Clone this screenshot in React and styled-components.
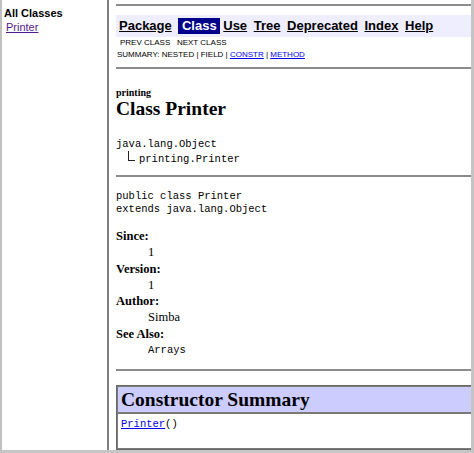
import React from "react";
import styled, { createGlobalStyle } from "styled-components";

const Global = createGlobalStyle`
  html, body { margin: 0; padding: 0; background: #fff; }
  body { font-family: "Liberation Serif", "Times New Roman", serif; color: #000; }
`;

const SERIF = `"Liberation Serif", "Times New Roman", serif`;
const SANS = `"Liberation Sans", Arial, sans-serif`;
const MONO = `"Liberation Mono", "Courier New", monospace`;

const Window = styled.div`
  display: flex;
  width: 474px;
  height: 453px;
  box-sizing: border-box;
  border-left: 2px solid #c0c0c0;
  border-right: 3px solid #c4c4c4;
  border-bottom: 3px solid #c6c6c6;
  overflow: hidden;
`;

const Sidebar = styled.nav`
  flex: 0 0 105px;
  box-sizing: border-box;
  padding: 7px 0 0 2px;
  font-family: ${SANS};
  font-size: 11px;
  line-height: 13px;
`;

const SideTitle = styled.div`
  font-weight: bold;
`;

const SideLink = styled.a`
  display: inline-block;
  margin: 1px 0 0 2px;
  color: #551a8b;
  text-decoration: underline;
`;

const Main = styled.main`
  flex: 1;
  min-width: 0;
  border-left: 2px solid #7f7f7f;
  padding-left: 7px;
  overflow: hidden;
`;

const Content = styled.div`
  width: 390px;
`;

const Rule = styled.div`
  height: 2px;
  background: #8c8c8c;
  margin-top: ${(p) => p.$mt}px;
`;

const NavBar = styled.div`
  display: flex;
  align-items: center;
  gap: 3px;
  height: 22px;
  margin-top: 9px;
  padding-left: 3px;
  background: #eeeeff;
  font-family: ${SANS};
  font-weight: bold;
  font-size: 13px;
  line-height: 16px;
`;

const NavLink = styled.a`
  color: #000;
  text-decoration: underline;
  margin-right: 3.6px;
  white-space: nowrap;
`;

const NavCurrent = styled.span`
  background: #00008b;
  color: #fff;
  padding: 0 3.6px;
  white-space: nowrap;
`;

const SubNav = styled.div`
  font-family: ${SANS};
  font-size: 8px;
  line-height: 12px;
  padding-left: ${(p) => p.$indent}px;
  white-space: pre;
`;

const SubLink = styled.a`
  color: #0000ee;
  text-decoration: underline;
`;

const PackageName = styled.div`
  margin-top: 18.5px;
  font-family: ${SERIF};
  font-weight: bold;
  font-size: 10px;
  line-height: 10px;
`;

const ClassTitle = styled.h2`
  margin: 0;
  font-family: ${SERIF};
  font-weight: bold;
  font-size: 19.5px;
  line-height: 22px;
`;

const MonoBlock = styled.div`
  margin-top: ${(p) => p.$mt}px;
  font-family: ${MONO};
  font-size: 10.5px;
  line-height: ${(p) => p.$lh}px;
  white-space: pre;
`;

const Elbow = styled.span`
  display: inline-block;
  width: 7px;
  height: 10px;
  margin: 0 4px 0 12px;
  border-left: 1px solid #222;
  border-bottom: 1px solid #222;
  vertical-align: 1px;
  box-sizing: border-box;
`;

const Tags = styled.dl`
  margin: 12px 0 0;
  font-family: ${SERIF};
  font-size: 12.5px;
  line-height: 16.3px;
`;

const Term = styled.dt`
  font-weight: bold;
`;

const Def = styled.dd`
  margin: 0 0 0 32px;
  font-family: ${(p) => (p.$mono ? MONO : SERIF)};
  font-size: ${(p) => (p.$mono ? 10.5 : 12.5)}px;
`;

const Summary = styled.table`
  margin-top: 14px;
  width: 380px;
  border: 1px solid #6a6a6a;
  border-collapse: separate;
  border-spacing: 0;
`;

const HeadCell = styled.th`
  text-align: left;
  background: #ccccff;
  border: 1px solid #7a7a7a;
  padding: 3px;
  font-family: ${SERIF};
  font-weight: bold;
  font-size: 19.5px;
  line-height: 19px;
`;

const BodyCell = styled.td`
  border: 1px solid #7a7a7a;
  padding: 3px;
  font-family: ${MONO};
  font-size: 10.5px;
  line-height: 14px;
`;

const CodeLink = styled.a`
  color: #0000ee;
  text-decoration: underline;
`;

export default function App() {
  const nav = ["Package", "Class", "Use", "Tree", "Deprecated", "Index", "Help"];
  return (
    <>
      <Global />
      <Window>
        <Sidebar>
          <SideTitle>All Classes</SideTitle>
          <SideLink href="#">Printer</SideLink>
        </Sidebar>
        <Main>
          <Content>
            <Rule $mt={4} />
            <NavBar>
              {nav.map((n) =>
                n === "Class" ? (
                  <NavCurrent key={n}>{n}</NavCurrent>
                ) : (
                  <NavLink key={n} href="#">
                    {n}
                  </NavLink>
                )
              )}
            </NavBar>
            <SubNav $indent={4}>{"PREV CLASS   NEXT CLASS"}</SubNav>
            <SubNav $indent={1}>
              {"SUMMARY: NESTED | FIELD | "}
              <SubLink href="#">CONSTR</SubLink>
              {" | "}
              <SubLink href="#">METHOD</SubLink>
            </SubNav>
            <Rule $mt={6} />
            <PackageName>printing</PackageName>
            <ClassTitle>Class Printer</ClassTitle>
            <MonoBlock $mt={17} $lh={14}>
              <div>java.lang.Object</div>
              <div>
                <Elbow />
                printing.Printer
              </div>
            </MonoBlock>
            <Rule $mt={9.5} />
            <MonoBlock $mt={13} $lh={13}>
              <div>public class Printer</div>
              <div>extends java.lang.Object</div>
            </MonoBlock>
            <Tags>
              <Term>Since:</Term>
              <Def>1</Def>
              <Term>Version:</Term>
              <Def>1</Def>
              <Term>Author:</Term>
              <Def>Simba</Def>
              <Term>See Also:</Term>
              <Def $mono>Arrays</Def>
            </Tags>
            <Rule $mt={10.5} />
            <Summary>
              <thead>
                <tr>
                  <HeadCell>Constructor Summary</HeadCell>
                </tr>
              </thead>
              <tbody>
                <tr>
                  <BodyCell>
                    <CodeLink href="#">Printer</CodeLink>()
                    <br />
                    {"\u00a0"}
                  </BodyCell>
                </tr>
              </tbody>
            </Summary>
          </Content>
        </Main>
      </Window>
    </>
  );
}
